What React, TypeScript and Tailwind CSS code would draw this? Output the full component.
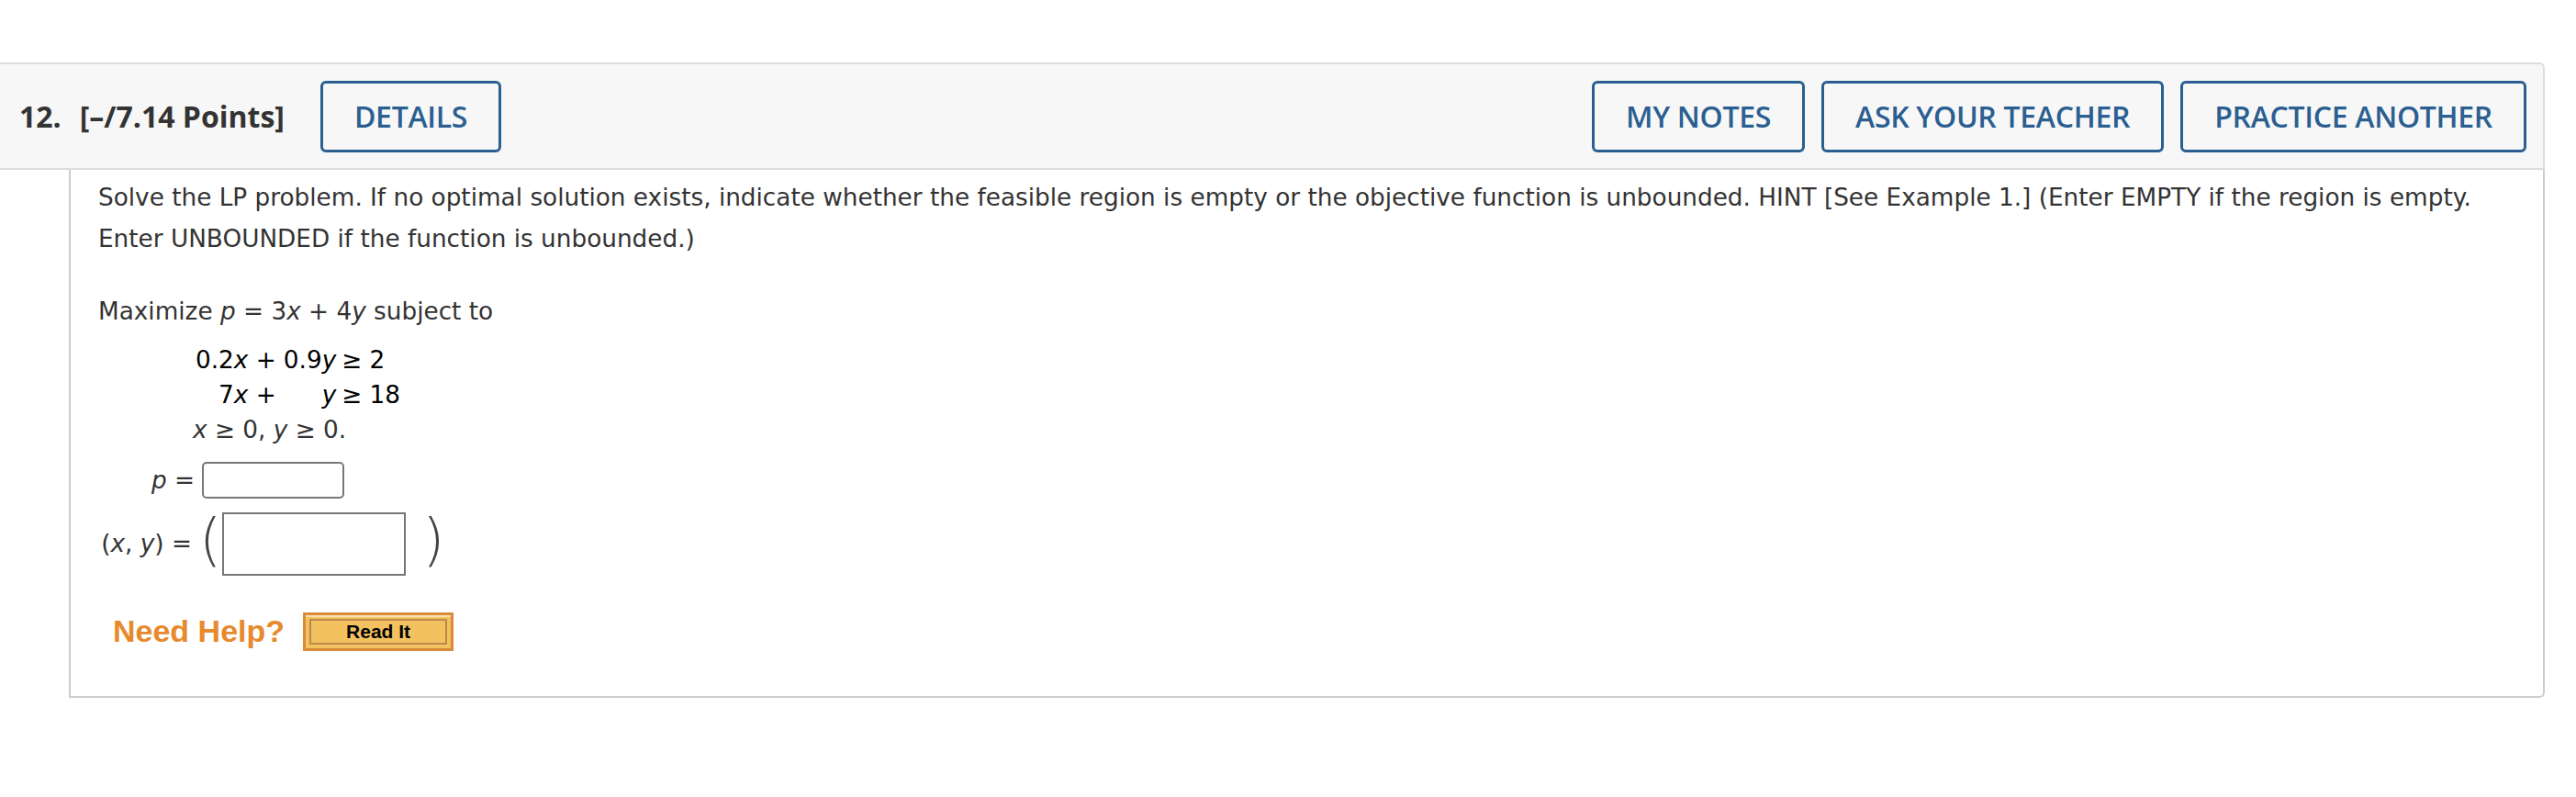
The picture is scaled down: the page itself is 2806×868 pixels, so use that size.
import React from "react";

const headerBtn =
  "h-[78px] px-[34px] flex items-center border-[3px] border-[#2b5f91] rounded-[6px] text-[#2b5f91] text-[32px] font-semibold tracking-[-0.3px]";

function Var({ children }: { children: React.ReactNode }) {
  return <i className="italic">{children}</i>;
}

export default function App() {
  return (
    <div className="w-[2806px] h-[868px] bg-white pt-[68px] overflow-hidden">
      <div className="w-[2772px]">
        {/* header bar */}
        <div
          className="h-[117px] bg-[#f7f7f7] border-t-2 border-r-2 border-b-2 border-[#dddddd] rounded-tr-[6px] flex items-center pl-[21px] pr-[18px]"
          style={{ fontFamily: "'Open Sans', sans-serif" }}
        >
          <span className="text-[32px] font-bold text-[#333]">12.</span>
          <span className="text-[32px] font-bold text-[#333] ml-[20px]">[–/7.14 Points]</span>
          <button className={headerBtn + " ml-[39px]"}>DETAILS</button>
          <div className="flex-1" />
          <div className="flex gap-[18px]">
            <button className={headerBtn}>MY NOTES</button>
            <button className={headerBtn}>ASK YOUR TEACHER</button>
            <button className={headerBtn}>PRACTICE ANOTHER</button>
          </div>
        </div>

        {/* question body */}
        <div
          className="ml-[75px] h-[575px] border-l-2 border-r-2 border-b-2 border-[#cccccc] rounded-br-[6px] pl-[30px] pt-[8px] text-[#333] text-[26.3px] leading-[45px]"
          style={{ fontFamily: "'DejaVu Sans', Verdana, sans-serif" }}
        >
          <p>
            Solve the LP problem. If no optimal solution exists, indicate whether the feasible region is empty or the
            objective function is unbounded. HINT [See Example 1.] (Enter EMPTY if the region is empty.
            <br />
            Enter UNBOUNDED if the function is unbounded.)
          </p>

          <p className="mt-[34px]">
            Maximize <Var>p</Var> = 3<Var>x</Var> + 4<Var>y</Var> subject to
          </p>

          <div className="mt-[11px] ml-[106px] leading-[38px]">
            <div className="grid grid-cols-[auto_auto_auto] w-max text-black">
              <span className="text-right whitespace-pre">
                0.2<Var>x</Var> +
              </span>
              <span className="text-right pl-[8px]">
                0.9<Var>y</Var>
              </span>
              <span className="pl-[6px]">≥ 2</span>
              <span className="text-right whitespace-pre">
                7<Var>x</Var> +
              </span>
              <span className="text-right pl-[8px]">
                <Var>y</Var>
              </span>
              <span className="pl-[6px]">≥ 18</span>
            </div>
            <div className="-ml-[3px]">
              <Var>x</Var> ≥ 0, <Var>y</Var> ≥ 0.
            </div>
          </div>

          <div className="mt-[16px] flex flex-col">
            <div className="flex items-center h-[40px]">
              <span className="w-[113px] text-right pr-[8px]">
                <Var>p</Var> =
              </span>
              <input className="w-[155px] h-[40px] border-2 border-[#777] rounded-[5px] bg-white" />
            </div>
            <div className="flex items-center mt-[14px] h-[70px]">
              <span className="w-[110px] text-right pr-[8px] whitespace-pre">
                (<Var>x</Var>, <Var>y</Var>){" ="}
              </span>
              <span className="text-[62px] font-extralight leading-none -mt-[8px] text-[#444]">(</span>
              <input className="ml-[1px] w-[200px] h-[69px] border-2 border-[#777] bg-white" />
              <span className="ml-[18px] text-[62px] font-extralight leading-none -mt-[8px] text-[#444]">)</span>
            </div>
          </div>

          <div className="mt-[38px] flex items-center ml-[16px]">
            <span
              className="text-[34px] font-bold text-[#e78a2e]"
              style={{ fontFamily: "'Liberation Sans', Arial, sans-serif" }}
            >
              Need Help?
            </span>
            <button
              className="ml-[20px] w-[164px] h-[42px] bg-[#f3c160] border-[3px] border-[#d88b3b] p-[4px] shadow-[inset_0_2px_0_#fbe2b0]"
              style={{ fontFamily: "'Liberation Sans', Arial, sans-serif" }}
            >
              <span className="flex h-full w-full items-center justify-center border-2 border-[#b98a4a] text-[21px] font-bold text-black">
                Read It
              </span>
            </button>
          </div>
        </div>
      </div>
    </div>
  );
}
